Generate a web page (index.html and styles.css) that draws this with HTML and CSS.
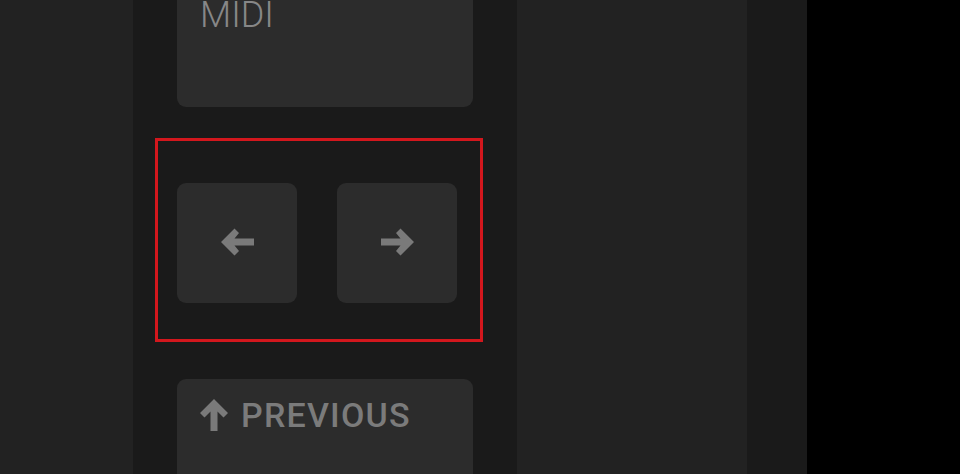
FILE: index.html
```html
<!DOCTYPE html>
<html>
<head>
<meta charset="utf-8">
<link rel="stylesheet" href="styles.css">
</head>
<body>
<div class="layout">
  <div class="col col-a"></div>
  <div class="col col-b">
    <div class="card card-midi"><span class="midi-label">MIDI</span></div>
    <div class="nav-box">
      <div class="key">
        <svg class="arrow" viewBox="0 0 33 28" width="33" height="28"><polygon points="0,14 13.5,0.5 18,5 13.5,10.5 33,10.5 33,17.5 13.5,17.5 18,23 13.5,27.5"/></svg>
      </div>
      <div class="key">
        <svg class="arrow" viewBox="0 0 33 28" width="33" height="28"><polygon transform="translate(33,0) scale(-1,1)" points="0,14 13.5,0.5 18,5 13.5,10.5 33,10.5 33,17.5 13.5,17.5 18,23 13.5,27.5"/></svg>
      </div>
    </div>
    <div class="card card-prev">
      <svg class="up" viewBox="0 0 30 32" width="30" height="32"><polygon points="15,0 29,14 24.5,18.5 18.5,12.5 18.5,32 11.5,32 11.5,12.5 5.5,18.5 1,14"/></svg>
      <span class="prev-label">PREVIOUS</span>
    </div>
  </div>
  <div class="col col-c"></div>
  <div class="col col-d"></div>
  <div class="col col-e"></div>
</div>
</body>
</html>
```
FILE: styles.css
```css
* { box-sizing: border-box; }
html, body { margin: 0; padding: 0; }
body {
  width: 960px;
  height: 474px;
  overflow: hidden;
  background: #000;
  font-family: Roboto, "Liberation Sans", sans-serif;
}
.layout {
  display: flex;
  height: 474px;
}
.col { height: 100%; flex: none; }
.col-a { width: 133px; background: #222222; }
.col-b {
  width: 384px;
  background: #1a1a1a;
  padding-left: 22px;
  display: flex;
  flex-direction: column;
  overflow: hidden;
}
.col-c { width: 230px; background: #222222; }
.col-d { width: 60px; background: #1a1a1a; }
.col-e { flex: 1; background: #000; }

.card {
  margin-left: 22px;
  width: 296px;
  background: #2c2c2c;
  border-radius: 9px;
  flex: none;
}
.card-midi {
  margin-top: -24px;
  height: 131px;
  padding: 26px 23px 0;
}
.midi-label {
  display: block;
  font-size: 36px;
  line-height: 26px;
  font-weight: 300;
  color: #878787;
}
.nav-box {
  margin-top: 31px;
  width: 328px;
  height: 204px;
  border: 3px solid #d3171d;
  padding: 42px 0 0 19px;
  display: flex;
  gap: 40px;
  flex: none;
}
.key {
  width: 120px;
  height: 120px;
  background: #2c2c2c;
  border-radius: 9px;
  display: flex;
  align-items: center;
  justify-content: center;
}
.arrow { fill: #7a7a7a; display: block; margin-top: -2px; }
.card-prev {
  margin-top: 37px;
  height: 120px;
  padding: 20px 22px;
  display: flex;
  align-items: flex-start;
  gap: 12px;
}
.up { fill: #7a7a7a; display: block; flex: none; }
.prev-label {
  font-size: 34px;
  line-height: 32px;
  font-weight: 500;
  color: #7b7b7b;
  letter-spacing: 1.2px;
}
```
